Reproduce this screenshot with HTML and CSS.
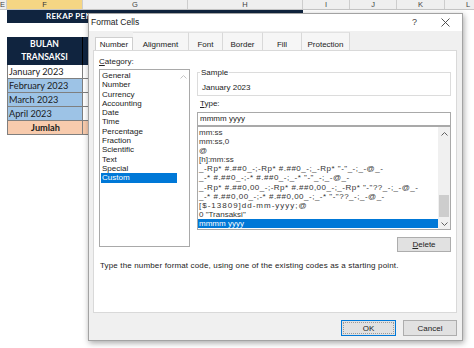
FILE: index.html
```html
<html>
<head>
<title>Format Cells</title>
<link rel="stylesheet" href="styles.css">
</head>
<body>

<div class="sheet">
	<div class="colheads">
		<div class="ch c-e">E</div>
		<div class="ch c-f picked">F</div>
		<div class="ch c-g">G</div>
		<div class="ch c-h">H</div>
		<div class="ch c-i">I</div>
		<div class="ch c-j">J</div>
		<div class="ch c-k">K</div>
		<div class="ch c-l">L</div>
	</div>
	<div class="row band">
		<div class="cell c-e"></div>
		<div class="cell title">REKAP PENJUALAN</div>
	</div>
	<div class="row gap"></div>
	<div class="row head">
		<div class="cell c-e"></div>
		<div class="cell c-f hd">BULAN<br>TRANSAKSI</div>
		<div class="cell c-g hd"></div>
	</div>
	<div class="row data">
		<div class="cell c-e"></div>
		<div class="cell c-f tc active">January 2023</div>
		<div class="cell c-g tc"></div>
	</div>
	<div class="row data">
		<div class="cell c-e"></div>
		<div class="cell c-f tc blue">February 2023</div>
		<div class="cell c-g tc"></div>
	</div>
	<div class="row data">
		<div class="cell c-e"></div>
		<div class="cell c-f tc blue">March 2023</div>
		<div class="cell c-g tc"></div>
	</div>
	<div class="row data">
		<div class="cell c-e"></div>
		<div class="cell c-f tc blue">April 2023</div>
		<div class="cell c-g tc"></div>
	</div>
	<div class="row data">
		<div class="cell c-e"></div>
		<div class="cell c-f tc total">Jumlah</div>
		<div class="cell c-g tc total"></div>
	</div>
</div>

<div class="dialog">
	<div class="titlebar">
		<span class="dtitle">Format Cells</span>
		<span class="help">?</span>
		<svg class="close" width="9" height="9" viewBox="0 0 9 9"><path d="M0.5 0.5 L8.5 8.5 M8.5 0.5 L0.5 8.5" stroke="#404040" stroke-width="0.9" fill="none"/></svg>
	</div>

	<div class="tabs">
		<div class="tab on t-num">Number</div>
		<div class="tab t-align">Alignment</div>
		<div class="tab t-font">Font</div>
		<div class="tab t-border">Border</div>
		<div class="tab t-fill">Fill</div>
		<div class="tab t-prot">Protection</div>
	</div>

	<div class="panel">
		<div class="cols">
			<div class="leftcol">
				<div class="lbl"><u>C</u>ategory:</div>
				<div class="listbox catlist">
					<div class="items">
						<div class="item">General</div>
						<div class="item">Number</div>
						<div class="item">Currency</div>
						<div class="item">Accounting</div>
						<div class="item">Date</div>
						<div class="item">Time</div>
						<div class="item">Percentage</div>
						<div class="item">Fraction</div>
						<div class="item">Scientific</div>
						<div class="item">Text</div>
						<div class="item">Special</div>
						<div class="item sel">Custom</div>
					</div>
					<div class="vscroll off">
						<div class="arrow up"><svg width="7" height="4" viewBox="0 0 7 4"><polyline points="0.5,3.5 3.5,0.5 6.5,3.5" fill="none" stroke="#c4c4c4"/></svg></div>
					</div>
				</div>
			</div>

			<div class="rightcol">
				<fieldset class="sample">
					<legend>Sample</legend>
					<div class="sample-val">January 2023</div>
				</fieldset>
				<div class="lbl type-lbl"><u>T</u>ype:</div>
				<div class="typebox">mmmm yyyy</div>
				<div class="listbox codelist">
					<div class="items">
						<div class="item code">mm:ss</div>
						<div class="item code">mm:ss,0</div>
						<div class="item code">@</div>
						<div class="item code">[h]:mm:ss</div>
						<div class="item code long">_-Rp* #.##0_-;-Rp* #.##0_-;_-Rp* "-"_-;_-@_-</div>
						<div class="item code long">_-* #.##0_-;-* #.##0_-;_-* "-"_-;_-@_-</div>
						<div class="item code long">_-Rp* #.##0,00_-;-Rp* #.##0,00_-;_-Rp* "-"??_-;_-@_-</div>
						<div class="item code long">_-* #.##0,00_-;-* #.##0,00_-;_-* "-"??_-;_-@_-</div>
						<div class="item code date">[$-13809]dd-mm-yyyy;@</div>
						<div class="item code">0 "Transaksi"</div>
						<div class="item code sel">mmmm yyyy</div>
					</div>
					<div class="vscroll">
						<div class="arrow up"><svg width="7" height="4" viewBox="0 0 7 4"><polyline points="0.5,3.5 3.5,0.5 6.5,3.5" fill="none" stroke="#606060"/></svg></div>
						<div class="track"><div class="thumb"></div></div>
						<div class="arrow down"><svg width="7" height="4" viewBox="0 0 7 4"><polyline points="0.5,0.5 3.5,3.5 6.5,0.5" fill="none" stroke="#606060"/></svg></div>
					</div>
				</div>
				<div class="btnrow"><button class="btn del"><u>D</u>elete</button></div>
			</div>
		</div>
		<p class="hint">Type the number format code, using one of the existing codes as a starting point.</p>
	</div>

	<div class="footer">
		<button class="btn ok">OK</button>
		<button class="btn">Cancel</button>
	</div>
</div>

</body>
</html>
```

FILE: styles.css
```css
* {
	box-sizing: border-box;
}
body {
	margin: 0;
	width: 474px;
	height: 348px;
	overflow: hidden;
	background: #fff;
	font-family: "Liberation Sans", Arial, sans-serif;
}

/* worksheet behind the dialog */
.sheet {
	font-family: Lato, "Liberation Sans", sans-serif;
	width: 474px;
	overflow: hidden;
}
.colheads {
	display: flex;
	height: 10px;
	background: #efefef;
	border-bottom: 1px solid #c6c6c6;
}
.ch {
	flex: none;
	border-right: 1px solid #cdcdcd;
	font: 7.5px/9px "Liberation Sans", sans-serif;
	color: #444;
	text-align: center;
	overflow: hidden;
}
.ch.c-e {
	text-align: right;
	padding-right: 4px;
}
.ch.picked {
	background: #f5d684;
	color: #333;
}
.c-e { width: 7px; }
.c-f { width: 76px; }
.c-g { width: 105px; }
.c-h { width: 115px; }
.c-i { width: 47px; }
.c-j { width: 47px; }
.c-k { width: 48px; }
.c-l { width: 47px; }

.row {
	display: flex;
}
.cell {
	flex: none;
	height: 100%;
}
.band { height: 13px; }
.gap { height: 14px; }
.head { height: 28px; }
.data { height: 14px; }

.title {
	width: 296px;
	background: #10243f;
	color: #fff;
	font-weight: bold;
	font-size: 8px;
	line-height: 13px;
	letter-spacing: 0.3px;
	padding-left: 39px;
	white-space: nowrap;
	overflow: hidden;
}
.hd {
	background: #10243f;
	color: #fff;
	font-weight: bold;
	font-size: 8.5px;
	line-height: 13px;
	text-align: center;
	padding-top: 1px;
	border-right: 1px solid #000;
}
.tc {
	border-right: 1px solid #7f7f7f;
	border-bottom: 1px solid #7f7f7f;
	font-size: 9.2px;
	line-height: 13px;
	color: #1b1b1b;
	padding-left: 1px;
	white-space: nowrap;
}
.c-f.tc {
	border-left: 1px solid #7f7f7f;
}
.active {
	background: #fff;
}
.blue {
	background: #9dc3e6;
}
.total {
	background: #f8cbad;
	font-weight: bold;
	text-align: center;
}

/* Format Cells dialog */
.dialog {
	position: absolute;
	left: 88px;
	top: 13px;
	width: 375px;
	height: 328px;
	background: #f0f0f0;
	border: 1px solid #a3a3a3;
	box-shadow: 1px 2px 6px rgba(0, 0, 0, 0.35);
	display: flex;
	flex-direction: column;
	font-size: 8px;
	line-height: 9px;
	color: #222;
}
.titlebar {
	height: 17px;
	flex: none;
	background: #fff;
	display: flex;
	align-items: center;
	padding: 0 12px 0 2px;
}
.dtitle {
	font-size: 8.5px;
}
.help {
	margin-left: auto;
	margin-right: 24px;
	font-size: 9px;
	color: #444;
}
.close {
	display: block;
}

.tabs {
	height: 19px;
	flex: none;
	display: flex;
	align-items: flex-end;
	padding-left: 6px;
}
.tab {
	height: 18px;
	padding-top: 7px;
	text-align: center;
	background: #f6f6f6;
	border-top: 1px solid #e2e2e2;
	border-right: 1px solid #d9d9d9;
}
.tab.on {
	height: 13px;
	padding-top: 2px;
	background: #fff;
	border: 1px solid #cfcfcf;
	border-bottom: none;
}
.t-num { width: 38px; }
.t-align { width: 56px; }
.t-font { width: 34px; }
.t-border { width: 40px; }
.t-fill { width: 39px; }
.t-prot { width: 48px; }

.panel {
	height: 263px;
	flex: none;
	margin: 0 5px 0 4px;
	background: #fff;
	border: 1px solid #d9d9d9;
	padding: 6px 5px 0 5px;
}
.cols {
	display: grid;
	grid-template-columns: 91px 254px;
	column-gap: 7px;
	align-items: start;
}
.lbl {
	line-height: 9px;
	margin-bottom: 3px;
}

.listbox {
	display: flex;
	border: 1px solid #a9a9a9;
	background: #fff;
}
.catlist {
	height: 178px;
}
.codelist {
	height: 104px;
}
.items {
	flex: 1;
	min-width: 0;
	padding: 1px 0 0 1px;
	overflow: hidden;
}
.codelist .items {
	padding-left: 0;
}
.item {
	line-height: 9.3px;
	padding-left: 1px;
	white-space: nowrap;
	color: #222;
}
.item.code {
	line-height: 9.1px;
	color: #333;
}
.item.long {
	letter-spacing: 0.5px;
}
.item.date {
	letter-spacing: 1px;
}
.item.sel {
	background: #0078d7;
	color: #fff;
}

.vscroll {
	width: 12px;
	flex: none;
	display: flex;
	flex-direction: column;
	background: #f0f0f0;
}
.vscroll.off {
	background: #fff;
}
.arrow {
	display: flex;
	align-items: center;
	justify-content: center;
}
.arrow svg {
	display: block;
}
.arrow.up {
	height: 13px;
}
.arrow.down {
	height: 11px;
}
.track {
	flex: 1;
	display: flex;
	flex-direction: column;
	justify-content: flex-end;
	padding: 0 1px 1px 1px;
}
.thumb {
	height: 22px;
	background: #cdcdcd;
}

.sample {
	margin: 11px 0 0 0;
	padding: 0 3px 3px 2px;
	border: 1px solid #dcdcdc;
	min-width: 0;
}
.sample legend {
	padding: 0 1px;
	line-height: 9px;
}
.sample-val {
	padding: 6px 0 0 2px;
	line-height: 9px;
}
.type-lbl {
	margin: 3px 0 0 0;
	padding-left: 3px;
}
.typebox {
	margin-top: 4px;
	height: 14px;
	border: 1px solid #a9a9a9;
	padding: 0 2px;
	line-height: 12px;
}

.btnrow {
	display: flex;
	justify-content: flex-end;
	margin-top: 7px;
}
.btn {
	height: 16px;
	width: 54px;
	padding: 0;
	border: 1px solid #adadad;
	background: #e1e1e1;
	font: 8px "Liberation Sans", Arial, sans-serif;
	color: #222;
}
.btn.del {
	height: 15px;
}
.btn.ok {
	width: 55px;
	border-color: #0078d7;
	outline: 1px dotted #9a9a9a;
	outline-offset: -3px;
}
.hint {
	margin: 9px 0 0 0;
	padding-left: 1px;
	line-height: 9px;
	letter-spacing: 0.15px;
}

.footer {
	flex: 1;
	display: flex;
	justify-content: flex-end;
	align-items: flex-start;
	gap: 7px;
	padding: 7px 5px 0 0;
}
```
